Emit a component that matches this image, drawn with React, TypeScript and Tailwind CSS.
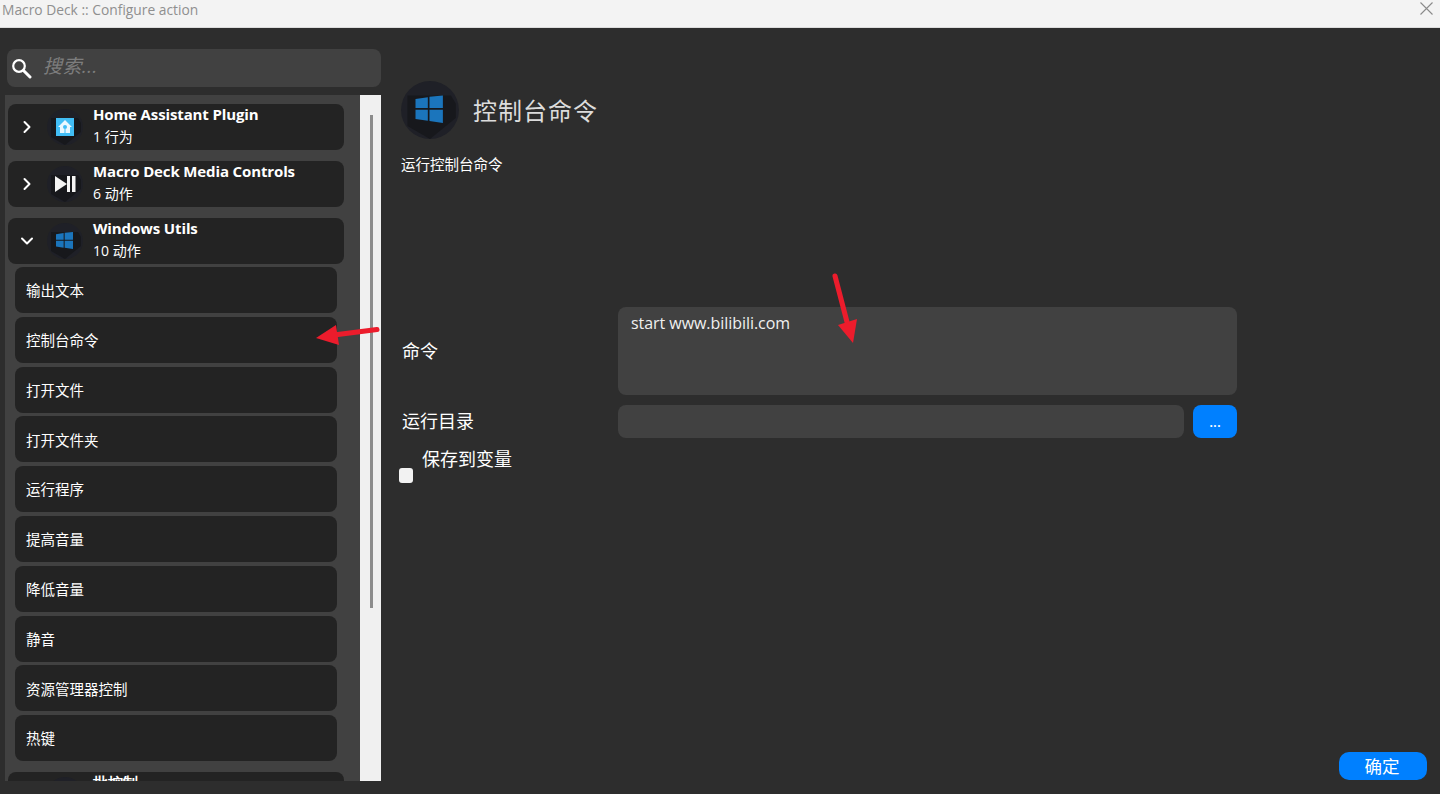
import React from 'react';
import { ChevronDown, ChevronRight } from 'lucide-react';

const FONT = "font-['Open_Sans','Noto_Sans_CJK_SC',sans-serif]";

const actions = ['输出文本', '控制台命令', '打开文件', '打开文件夹', '运行程序', '提高音量', '降低音量', '静音', '资源管理器控制', '热键'];

function WindowsGlyph({ x, y, s }: { x: number; y: number; s: number }) {
  return (
    <g transform={`translate(${x} ${y}) scale(${s})`} fill="#1b75bc">
      <path d="M0 2.5 L9 1.2 V9.2 H0 Z" />
      <path d="M10.2 1 L20 0 V9.2 H10.2 Z" />
      <path d="M0 10.4 H9 V18.4 L0 17.2 Z" />
      <path d="M10.2 10.4 H20 V20 L10.2 18.6 Z" />
    </g>
  );
}

function PluginIcon({ kind, size = 36 }: { kind: 'home' | 'media' | 'windows'; size?: number }) {
  return (
    <svg width={size} height={size} viewBox="0 0 36 36" className="shrink-0">
      <circle cx="18" cy="18" r="18" fill="#1f2027" />
      <path d="M4 9 H31 L34 14 V23 L18 36 L4 28 Z" fill="#17181c" />
      {kind === 'home' && (
        <g>
          <rect x="9" y="9" width="18" height="18" fill="#41bdf5" />
          <path d="M18 11 L25 18 H23 V24 H13 V18 H11 Z" fill="#eaf8ff" />
          <circle cx="18" cy="18" r="2" fill="#41bdf5" />
          <path d="M18 20 V24" stroke="#41bdf5" strokeWidth="1" />
        </g>
      )}
      {kind === 'media' && (
        <g fill="#f5f5f5">
          <path d="M8 10 L20 18 L8 26 Z" />
          <rect x="20" y="10" width="3" height="16" />
          <rect x="25" y="10" width="3.5" height="16" />
        </g>
      )}
      {kind === 'windows' && <WindowsGlyph x={9} y={9} s={0.85} />}
    </svg>
  );
}

function PluginCard({ name, count, kind, open }: { name: string; count: string; kind: 'home' | 'media' | 'windows'; open?: boolean }) {
  return (
    <div className="flex h-[46px] w-[336px] shrink-0 items-center rounded-lg bg-[#232323] pl-[9px]">
      {open ? (
        <ChevronDown className="h-[20px] w-[20px] text-white" strokeWidth={2.4} />
      ) : (
        <ChevronRight className="h-[20px] w-[20px] text-white" strokeWidth={2.4} />
      )}
      <div className="ml-[10px]">
        <PluginIcon kind={kind} />
      </div>
      <div className="-mt-[4px] ml-[10px] flex flex-col text-white">
        <span className="text-[15px] font-bold leading-[20px] tracking-[-0.13px] font-['Open_Sans',sans-serif]">{name}</span>
        <span className="mt-[3px] text-[14px] leading-[20px]">{count}</span>
      </div>
    </div>
  );
}

function Arrow({ className, d, head }: { className: string; d: string; head: string }) {
  return (
    <svg className={className} viewBox="0 0 80 90" fill="none">
      <path d={d} stroke="#ec1c2c" strokeWidth="5" strokeLinecap="round" />
      <path d={head} fill="#ec1c2c" />
    </svg>
  );
}

export default function App() {
  return (
    <div className={`relative flex h-[794px] w-[1440px] flex-col overflow-hidden bg-[#2d2d2d] ${FONT}`}>
      <div className="flex h-[28px] shrink-0 items-start justify-between border-b border-[#dcdcdc] bg-[#f3f3f3] pl-[2px] pr-[7px]">
        <span className="text-[13.8px] leading-[20px] text-[#8f8f8f]">Macro Deck :: Configure action</span>
        <svg width="13" height="13" viewBox="0 0 13 13" className="mt-[2px]" stroke="#8a8a8a" strokeWidth="1.1">
          <path d="M0.5 0.5 L12.5 12.5 M12.5 0.5 L0.5 12.5" />
        </svg>
      </div>

      <div className="flex min-h-0 flex-1">
        <div className="flex w-[381px] shrink-0 flex-col pl-[5px] pt-[21px]">
          <div className="ml-[2px] flex h-[38px] w-[374px] shrink-0 items-center rounded-lg bg-[#414141] pl-[4px]">
            <svg width="21" height="21" viewBox="0 0 21 21" fill="none" stroke="#fff" className="shrink-0">
              <circle cx="8" cy="8" r="5.8" strokeWidth="2.2" />
              <path d="M12.5 12.5 L19 19" strokeWidth="3" strokeLinecap="round" />
            </svg>
            <span className="-mt-[3px] ml-[11px] text-[19px] italic tracking-[0.5px] text-[#7d7d7d]">搜索...</span>
          </div>

          <div className="mt-[8px] flex h-[686px] w-[376px]">
            <div className="flex h-full w-[355px] flex-col overflow-hidden bg-[#414141] pl-[3px] pt-[9px]">
              <div className="flex flex-col gap-[11px]">
                <PluginCard name="Home Assistant Plugin" count="1 行为" kind="home" />
                <PluginCard name="Macro Deck Media Controls" count="6 动作" kind="media" />
                <PluginCard name="Windows Utils" count="10 动作" kind="windows" open />
              </div>
              <div className="ml-[7px] mt-[3px] flex flex-col gap-[3.8px]">
                {actions.map((a) => (
                  <div key={a} className="flex h-[46px] w-[322px] shrink-0 items-center rounded-lg bg-[#232323] pl-[11px] pt-[2px] text-[14.5px] text-white">
                    {a}
                  </div>
                ))}
              </div>
              <div className="mt-[11px] shrink-0">
                <PluginCard name="批控制" count={'\u00a0'} kind="windows" />
              </div>
            </div>
            <div className="h-full w-[21px] bg-[#f0f0f0] pl-[10px] pt-[20px]">
              <div className="h-[493px] w-[3px] bg-[#8c8c8c]" />
            </div>
          </div>
        </div>

        <div className="flex min-w-0 flex-1 flex-col pb-[14px] pl-[20px] pr-[13px] pt-[52px]">
          <div className="flex h-[60px] items-center">
            <PluginIcon kind="windows" size={58} />
            <span className="ml-[14px] mt-[2px] text-[24px] tracking-[1px] text-[#dcdcdc]">控制台命令</span>
          </div>
          <div className="mt-[15px] text-[14.5px] leading-[20px] text-white">运行控制台命令</div>

          <div className="mt-[132px] flex h-[88px] items-center">
            <span className="w-[217px] shrink-0 pl-px text-[18px] text-white">命令</span>
            <div className="h-full w-[619px] rounded-lg bg-[#414141] pl-[13px] pt-[5px] text-[16px] leading-[22px] tracking-[-0.05px] text-[#f0f0f0]">
              start www.bilibili.com
            </div>
          </div>

          <div className="mt-[10px] flex h-[33px] items-center">
            <span className="w-[217px] shrink-0 pl-px text-[18px] text-white">运行目录</span>
            <div className="h-full w-[566px] rounded-lg bg-[#414141]" />
            <div className="ml-[9px] flex h-full w-[44px] items-center justify-center rounded-lg bg-[#0080ff] text-[14px] font-semibold text-white">
              ...
            </div>
          </div>

          <div className="relative mt-[9px] flex h-[36px] items-start pl-[21px]">
            <span className="text-[18px] leading-[24px] text-white">保存到变量</span>
            <div className="absolute left-[-2px] top-[21px] h-[15px] w-[14px] rounded-[3px] bg-[#f2f2f2]" />
          </div>

          <div className="mt-auto flex justify-end">
            <div className="flex h-[28px] w-[88px] items-center justify-center rounded-[10px] bg-[#0080ff] pr-[2px] text-[17.5px] text-white">确定</div>
          </div>
        </div>
      </div>

      <Arrow
        className="absolute left-[300px] top-[300px] h-[90px] w-[80px]"
        d="M77 29.5 L34 35"
        head="M16 38 L36 25 L39 45 Z"
      />
      <Arrow
        className="absolute left-[810px] top-[270px] h-[90px] w-[80px]"
        d="M25 6 L37 52"
        head="M43 73 L28 55 L47 49 Z"
      />
    </div>
  );
}
